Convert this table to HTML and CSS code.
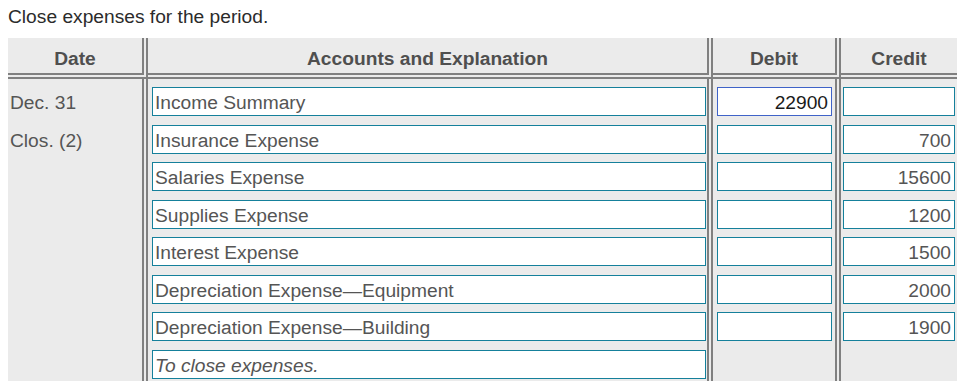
FILE: index.html
```html
<!DOCTYPE html>
<html lang="en">
<head>
<meta charset="utf-8">
<title>Close expenses</title>
<link rel="stylesheet" href="styles.css">
</head>
<body>
<div class="page">
  <p class="prompt">Close expenses for the period.</p>
  <div class="ledger">
    <div class="hd col-date">Date</div>
    <div class="hd col-acct">Accounts and Explanation</div>
    <div class="hd col-debit">Debit</div>
    <div class="hd col-credit">Credit</div>

    <div class="cell col-date first"><span class="date">Dec. 31</span></div>
    <div class="cell col-acct first"><div class="field acct">Income Summary</div></div>
    <div class="cell col-debit first"><div class="field debit num active">22900</div></div>
    <div class="cell col-credit first"><div class="field credit num"></div></div>

    <div class="cell col-date"><span class="date">Clos. (2)</span></div>
    <div class="cell col-acct"><div class="field acct">Insurance Expense</div></div>
    <div class="cell col-debit"><div class="field debit num"></div></div>
    <div class="cell col-credit"><div class="field credit num">700</div></div>

    <div class="cell col-date"></div>
    <div class="cell col-acct"><div class="field acct">Salaries Expense</div></div>
    <div class="cell col-debit"><div class="field debit num"></div></div>
    <div class="cell col-credit"><div class="field credit num">15600</div></div>

    <div class="cell col-date"></div>
    <div class="cell col-acct"><div class="field acct">Supplies Expense</div></div>
    <div class="cell col-debit"><div class="field debit num"></div></div>
    <div class="cell col-credit"><div class="field credit num">1200</div></div>

    <div class="cell col-date"></div>
    <div class="cell col-acct"><div class="field acct">Interest Expense</div></div>
    <div class="cell col-debit"><div class="field debit num"></div></div>
    <div class="cell col-credit"><div class="field credit num">1500</div></div>

    <div class="cell col-date"></div>
    <div class="cell col-acct"><div class="field acct">Depreciation Expense—Equipment</div></div>
    <div class="cell col-debit"><div class="field debit num"></div></div>
    <div class="cell col-credit"><div class="field credit num">2000</div></div>

    <div class="cell col-date"></div>
    <div class="cell col-acct"><div class="field acct">Depreciation Expense—Building</div></div>
    <div class="cell col-debit"><div class="field debit num"></div></div>
    <div class="cell col-credit"><div class="field credit num">1900</div></div>

    <div class="cell col-date"></div>
    <div class="cell col-acct"><div class="field acct explain">To close expenses.</div></div>
    <div class="cell col-debit"></div>
    <div class="cell col-credit"></div>
  </div>
</div>
</body>
</html>
```

FILE: styles.css
```css
html, body {
  margin: 0;
  padding: 0;
  background: #ffffff;
}

.page {
  padding: 6px 0 0 8px;
  font-family: "Liberation Sans", Arial, sans-serif;
  font-size: 19.2px;
  color: #555555;
}

.prompt {
  margin: 0 0 10px 0;
  line-height: 22px;
  color: #2b2b2b;
}

.ledger {
  display: grid;
  grid-template-columns: 140px 565px 128px 116px;
  grid-template-rows: 41px 45.5px repeat(6, 37.5px) 31.5px;
  width: 949px;
  background: #ebebeb;
}

.hd,
.cell {
  box-sizing: border-box;
}

.col-date,
.col-acct,
.col-debit {
  border-right: 6px double #808080;
}

.hd {
  border-bottom: 6px double #808080;
  padding-top: 10px;
  line-height: 22px;
  text-align: center;
  font-weight: bold;
  color: #4f4f4f;
}

.cell.first {
  padding-top: 8px;
}

.date {
  display: block;
  padding: 5px 0 0 2px;
  line-height: 22px;
  color: #555555;
}

.field {
  box-sizing: border-box;
  height: 29px;
  border: 1px solid #15809b;
  background: #ffffff;
  padding: 4px 3px 0 2px;
  line-height: 22px;
  white-space: nowrap;
  overflow: hidden;
  color: #555555;
}

.field.num {
  text-align: right;
}

.field.acct {
  margin-left: 4px;
  width: 554px;
}

.field.debit {
  margin-left: 4px;
  width: 115px;
}

.field.credit {
  margin-left: 2px;
  width: 112px;
}

.field.active {
  border-color: #3f63c8;
  color: #1a1a1a;
}

.field.explain {
  font-style: italic;
}
```
